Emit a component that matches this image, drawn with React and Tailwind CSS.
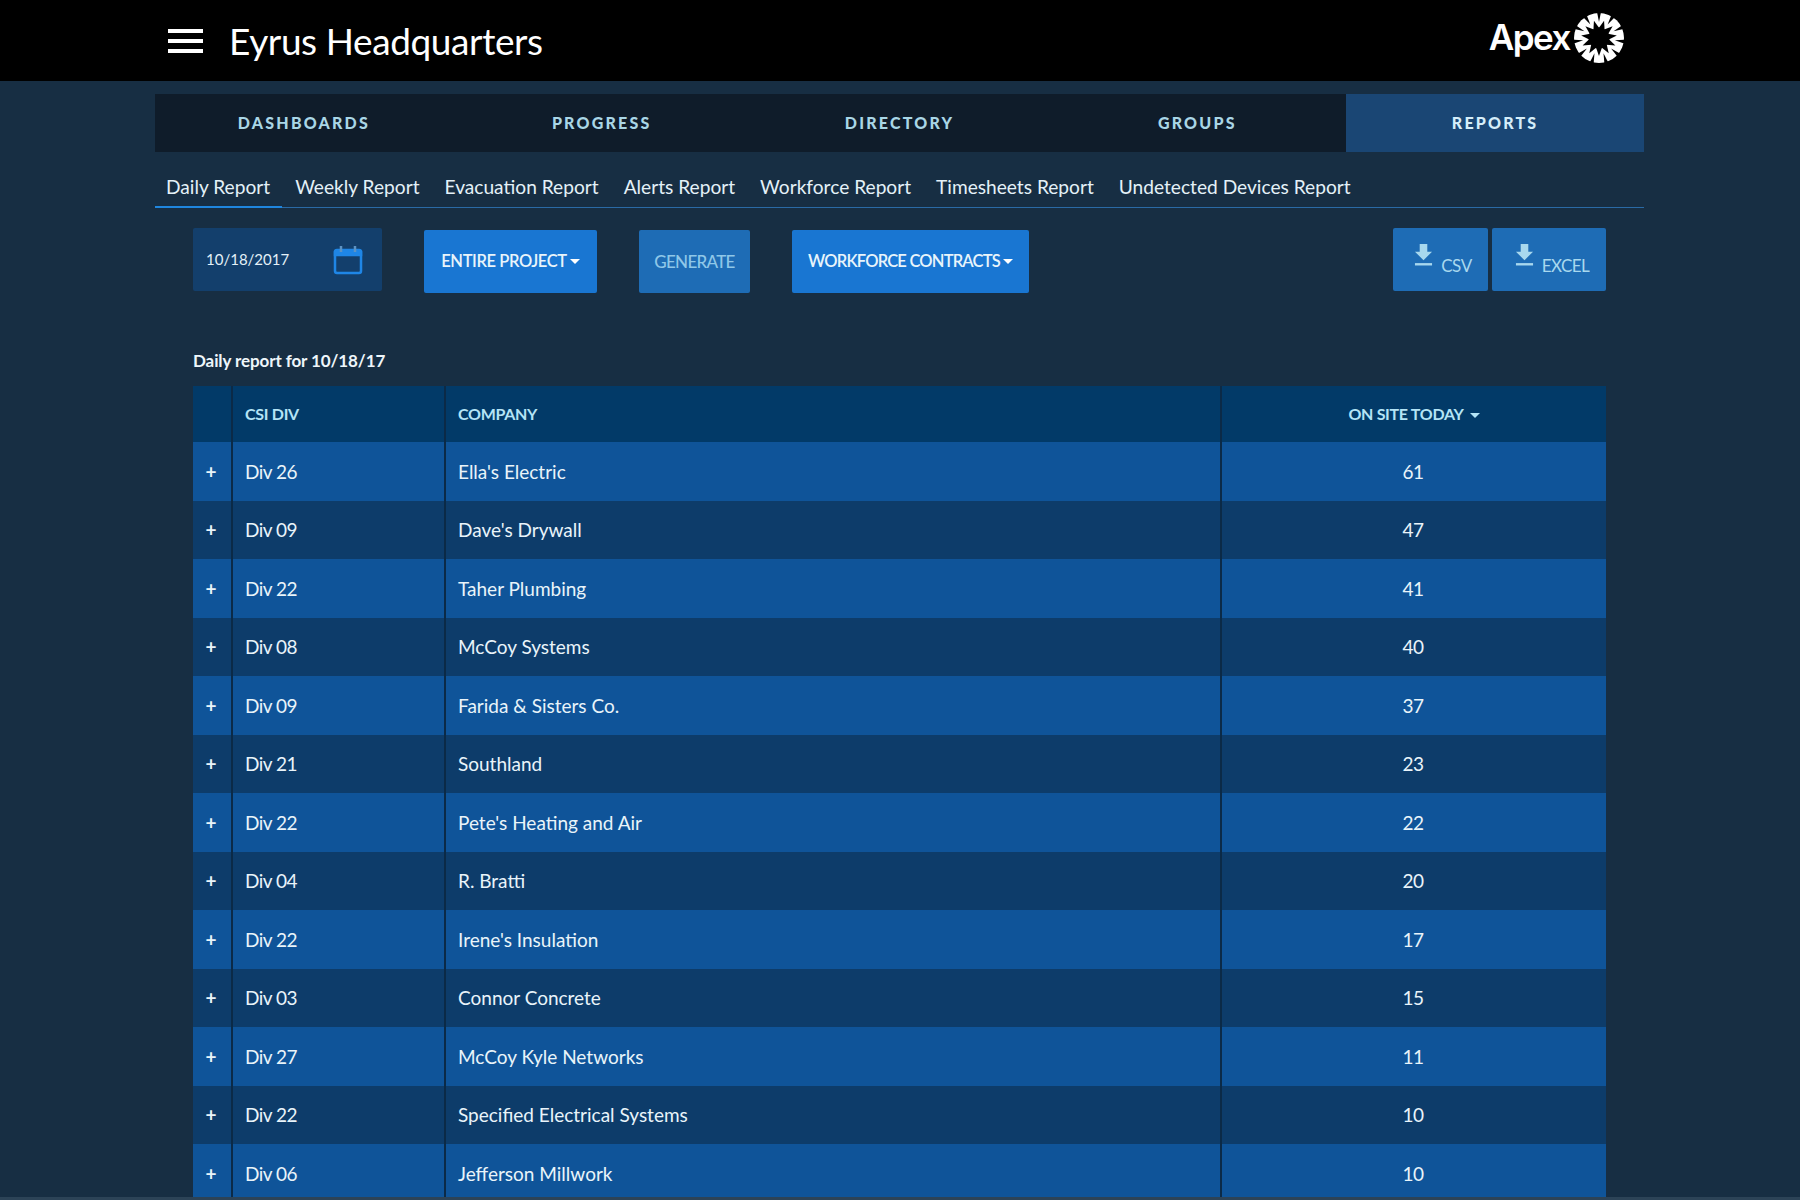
import React from 'react';

const tabs = ['DASHBOARDS', 'PROGRESS', 'DIRECTORY', 'GROUPS', 'REPORTS'];
const subTabs = ['Daily Report', 'Weekly Report', 'Evacuation Report', 'Alerts Report', 'Workforce Report', 'Timesheets Report', 'Undetected Devices Report'];
const rows = [
  ['Div 26', "Ella's Electric", 61],
  ['Div 09', "Dave's Drywall", 47],
  ['Div 22', 'Taher Plumbing', 41],
  ['Div 08', 'McCoy Systems', 40],
  ['Div 09', 'Farida & Sisters Co.', 37],
  ['Div 21', 'Southland', 23],
  ['Div 22', "Pete's Heating and Air", 22],
  ['Div 04', 'R. Bratti', 20],
  ['Div 22', "Irene's Insulation", 17],
  ['Div 03', 'Connor Concrete', 15],
  ['Div 27', 'McCoy Kyle Networks', 11],
  ['Div 22', 'Specified Electrical Systems', 10],
  ['Div 06', 'Jefferson Millwork', 10],
];

// white ring with slits cut from the rim and teeth cut from the hole
const ApexMark = () => (
  <svg viewBox="-25 -25 50 50" className="w-[50px] h-[50px]">
    <circle r="25" fill="#fff" />
    {Array.from({ length: 11 }).map((_, i) => (
      <g key={i} transform={`rotate(${(i * 360) / 11})`}>
        <path d="M-2 -26 L2 -26 L0 -16 Z" fill="#000" />
        <path d="M-3 -9.5 L3 -9.5 L0 -18 Z" fill="#000" transform="rotate(16.4)" />
      </g>
    ))}
    <circle r="10.5" fill="#000" />
  </svg>
);

const DownloadIcon = () => (
  <svg viewBox="0 0 20 24" className="w-[19px] h-[23px]" fill="#a8d8ee">
    <path d="M6 0h8v8h5l-9 9-9-9h5z" />
    <rect x="1" y="20" width="18" height="2.5" />
  </svg>
);

const CalendarIcon = () => (
  <svg viewBox="0 0 30 30" className="w-[30px] h-[30px]" fill="none" stroke="#1f86e6" strokeWidth="2.5">
    <rect x="2" y="5" width="26" height="23" rx="2" />
    <path d="M2 7h26v3H2z" fill="#1f86e6" />
    <path d="M8 1v6M22 1v6" stroke="#5c93c4" />
  </svg>
);

const Caret = ({ className }) => <span className={`inline-block border-x-[5px] border-x-transparent border-t-[5px] ${className}`} />;

export default function App() {
  return (
    <div className="h-[1200px] overflow-hidden bg-[#172e43] text-white border-b-[3px] border-[#2c4357] font-['Lato','Noto_Sans',sans-serif]">
      <header className="h-[81px] bg-black flex items-center justify-between pl-[168px] pr-[176px]">
        <div className="flex items-center gap-[26px]">
          <div className="w-[35px] flex flex-col gap-[6px]">
            <div className="h-[4px] bg-white" />
            <div className="h-[4px] bg-white" />
            <div className="h-[4px] bg-white" />
          </div>
          <h1 className="text-[37px] leading-none tracking-[-0.4px]">Eyrus Headquarters</h1>
        </div>
        <div className="flex items-center gap-[4px] -mt-[6px]">
          <span className="font-['Inter',sans-serif] font-semibold text-[35px] leading-none tracking-[-1.5px]">Apex</span>
          <ApexMark />
        </div>
      </header>

      <main className="w-[1489px] ml-[155px] pt-[13px]">
        <nav className="grid grid-cols-5 h-[58px] bg-[#0f1c2a]">
          {tabs.map(t => (
            <div
              key={t}
              className={`flex items-center justify-center text-[16px] font-black tracking-[2.2px] ${t === 'REPORTS' ? 'bg-[#1a4674] text-[#d5eefa]' : 'text-[#a9d6e6]'}`}
            >
              {t}
            </div>
          ))}
        </nav>

        <div className="flex gap-[25px] h-[56px] pl-[11px] border-b border-[#2a6aa5] relative">
          {subTabs.map(t => (
            <div key={t} className="pt-[22px] text-[19.15px] leading-[26px] text-[#e4f1f8]">{t}</div>
          ))}
          <div className="absolute left-0 -bottom-px w-[127px] h-[2px] bg-[#1f86de]" />
        </div>

        <div className="px-[38px]">
          <div className="flex items-start mt-[20px]">
            <div className="w-[189px] h-[63px] bg-[#133f6c] flex items-center justify-between pl-[13px] pr-[19px] text-[15px] text-[#e4f1f8] rounded-[2px]">
              10/18/2017
              <CalendarIcon />
            </div>
            <button className="ml-[42px] mt-[2px] w-[173px] h-[63px] rounded-[2px] bg-[#1976d2] flex items-center justify-center gap-[3px] text-[16.5px] font-semibold tracking-[-0.4px] text-[#e8f4fb]">
              ENTIRE PROJECT <Caret className="border-t-white" />
            </button>
            <button className="ml-[42px] mt-[2px] w-[111px] h-[63px] rounded-[2px] bg-[#1e6cb5] text-[17px] font-medium tracking-[-0.7px] text-[#8fc7e8]">
              GENERATE
            </button>
            <button className="ml-[42px] mt-[2px] w-[237px] h-[63px] rounded-[2px] bg-[#1976d2] flex items-center justify-center gap-[3px] text-[16.5px] font-semibold tracking-[-0.8px] text-[#e8f4fb]">
              WORKFORCE CONTRACTS <Caret className="border-t-white" />
            </button>
            <div className="ml-auto flex gap-[4px]">
              <button className="w-[95px] h-[63px] rounded-[2px] bg-[#1e6cb5] flex items-start justify-center gap-[8px] pt-[16px] pl-[5px] text-[#a8d8ee]">
                <DownloadIcon />
                <span className="text-[17px] tracking-[-0.4px] leading-none mt-[13px]">CSV</span>
              </button>
              <button className="w-[114px] h-[63px] rounded-[2px] bg-[#1e6cb5] flex items-start justify-center gap-[8px] pt-[16px] pl-[6px] text-[#a8d8ee]">
                <DownloadIcon />
                <span className="text-[17px] tracking-[-0.6px] leading-none mt-[13px]">EXCEL</span>
              </button>
            </div>
          </div>

          <p className="mt-[57px] text-[17px] leading-[22px] font-bold tracking-[-0.1px] text-[#eef6fb]">Daily report for 10/18/17</p>

          <table className="mt-[14px] w-[1413px] table-fixed border-collapse">
            <thead>
              <tr className="h-[56px] bg-[#023a68] text-[16px] font-black tracking-[-0.3px] text-[#b4e4f6]">
                <th className="w-[39px] border-r-2 border-[#0b2a47]" />
                <th className="w-[213px] text-left pl-[12px] border-r-2 border-[#0b2a47]">CSI DIV</th>
                <th className="w-[776px] text-left pl-[12px] border-r-2 border-[#0b2a47]">COMPANY</th>
                <th>
                  <span className="inline-flex items-center gap-[6px]">
                    ON SITE TODAY
                    <Caret className="border-t-[#b4e4f6] mt-[3px]" />
                  </span>
                </th>
              </tr>
            </thead>
            <tbody>
              {rows.map((r, i) => (
                <tr key={i} className={`h-[58.5px] text-[19px] text-[#e9f4fa] ${i % 2 === 0 ? 'bg-[#0f5499]' : 'bg-[#0d3c6a]'}`}>
                  <td className="text-center pr-[2px] pt-px border-r-2 border-[#0b2a47] font-bold">+</td>
                  <td className="pl-[12px] pt-px border-r-2 border-[#0b2a47] tracking-[-0.5px]">{r[0]}</td>
                  <td className="pl-[12px] pt-px border-r-2 border-[#0b2a47]">{r[1]}</td>
                  <td className="text-center pt-px pr-[2px] tracking-[-0.4px]">{r[2]}</td>
                </tr>
              ))}
            </tbody>
          </table>
        </div>
      </main>
    </div>
  );
}
